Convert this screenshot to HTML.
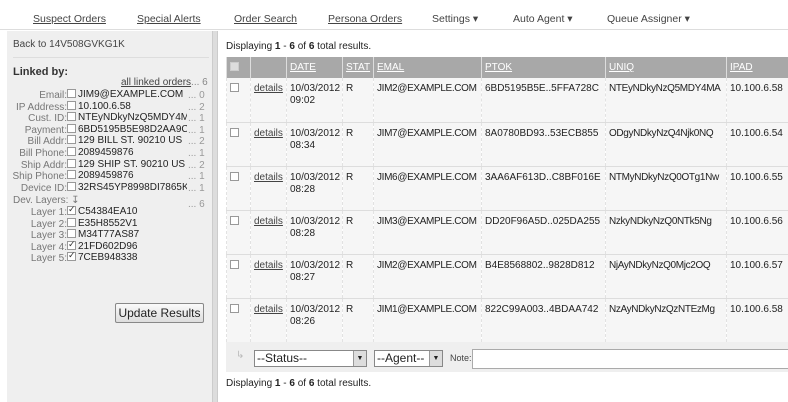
<!DOCTYPE html>
<html><head><style>
*{margin:0;padding:0;box-sizing:border-box}
body{width:788px;height:402px;overflow:hidden;background:#fff;font-family:"Liberation Sans",Arial,sans-serif;font-size:11px;color:#222;position:relative}
.nav{position:absolute;top:0;left:0;width:788px;height:30px;border-bottom:1px solid #ddd}
.nav span{position:absolute;top:13px;font-size:10.5px;color:#444}
.left{position:absolute;left:7px;top:31px;width:205px;height:371px;background:#efefef}
.split{position:absolute;left:212px;top:31px;width:6px;height:371px;background:#ddd;border-left:1px solid #ccc;border-right:1px solid #ccc}
.lt{position:absolute;font-size:10px;color:#777;white-space:nowrap}
.lb{position:absolute;left:0;width:60px;text-align:right;font-size:10px;color:#777;white-space:nowrap}
.lv{position:absolute;left:60px;width:120px;overflow:hidden;font-size:10px;color:#222;white-space:nowrap}
.cb{display:inline-block;width:9px;height:9px;border:1px solid #999;background:#fff;vertical-align:-1px;margin-right:2px;position:relative}
.cb.c:after{content:"✓";position:absolute;left:0;top:-3px;font-size:9px;color:#333}
.cnt{position:absolute;left:181px;font-size:10px;color:#999}
table{position:absolute;left:226px;top:57px;border-collapse:collapse;table-layout:fixed;width:570px}
th{background:#a8a8a8;height:21px;color:#fff;font-weight:normal;text-align:left;padding-left:3px;border-left:1px solid #ddd;text-decoration:underline;font-size:10px}
td{height:44px;vertical-align:top;padding:5px 3px 0;border-bottom:1px solid #ddd;border-left:1px dashed #e2e2e2;background:#f6f6f6;font-size:10px;line-height:12px;white-space:nowrap;overflow:hidden}
td.d{text-decoration:underline;color:#444}
td.e{letter-spacing:-0.35px}
.bar{position:absolute;left:226px;top:342px;width:562px;height:30px;background:#efefef}
.sel{position:absolute;top:8px;height:17px;border:1px solid #888;background:#fff;font-size:12px;padding-left:2px;line-height:15px}
.sel i{position:absolute;right:0;top:0;width:13px;height:15px;border-left:1px solid #999;background:#ddd;font-style:normal;font-size:7px;text-align:center;line-height:15px}
</style></head><body>
<div class="nav">
<span style="left:33px"><u>Suspect Orders</u></span>
<span style="left:137px"><u>Special Alerts</u></span>
<span style="left:234px"><u>Order Search</u></span>
<span style="left:328px"><u>Persona Orders</u></span>
<span style="left:432px">Settings ▾</span>
<span style="left:513px">Auto Agent ▾</span>
<span style="left:607px">Queue Assigner ▾</span>
</div>
<div class="left">
<div class="lt" style="left:6px;top:8px;color:#444">Back to 14V508GVKG1K</div>
<div style="position:absolute;left:6px;top:26px;width:196px;border-top:1px solid #ddd"></div>
<div class="lt" style="left:6px;top:35px;color:#333;font-weight:bold;font-size:11px">Linked by:</div>
<div class="lt" style="left:114px;top:46px;color:#444"><u>all linked orders</u><span style="color:#888">... 6</span></div>
<div class="lb" style="top:59px">Email:</div><div class="lv" style="top:58px"><span class="cb"></span>JIM9@EXAMPLE.COM</div><div class="cnt" style="top:59px">... 0</div>
<div class="lb" style="top:71px">IP Address:</div><div class="lv" style="top:70px"><span class="cb"></span>10.100.6.58</div><div class="cnt" style="top:71px">... 2</div>
<div class="lb" style="top:82px">Cust. ID:</div><div class="lv" style="top:81px"><span class="cb"></span>NTEyNDkyNzQ5MDY4M</div><div class="cnt" style="top:82px">... 1</div>
<div class="lb" style="top:94px">Payment:</div><div class="lv" style="top:93px"><span class="cb"></span>6BD5195B5E98D2AA9C</div><div class="cnt" style="top:94px">... 1</div>
<div class="lb" style="top:105px">Bill Addr:</div><div class="lv" style="top:104px"><span class="cb"></span>129 BILL ST. 90210 US</div><div class="cnt" style="top:105px">... 2</div>
<div class="lb" style="top:117px">Bill Phone:</div><div class="lv" style="top:116px"><span class="cb"></span>2089459876</div><div class="cnt" style="top:117px">... 1</div>
<div class="lb" style="top:129px">Ship Addr:</div><div class="lv" style="top:128px"><span class="cb"></span>129 SHIP ST. 90210 US</div><div class="cnt" style="top:129px">... 2</div>
<div class="lb" style="top:140px">Ship Phone:</div><div class="lv" style="top:139px"><span class="cb"></span>2089459876</div><div class="cnt" style="top:140px">... 1</div>
<div class="lb" style="top:152px">Device ID:</div><div class="lv" style="top:151px"><span class="cb"></span>32RS45YP8998DI7865K</div><div class="cnt" style="top:152px">... 1</div>
<div class="lt" style="left:6px;top:164px">Dev. Layers: ↧</div><div class="cnt" style="top:168px">... 6</div>
<div class="lb" style="top:176px">Layer 1:</div><div class="lv" style="top:175px"><span class="cb c"></span>C54384EA10</div>
<div class="lb" style="top:188px">Layer 2:</div><div class="lv" style="top:187px"><span class="cb"></span>E35H8552V1</div>
<div class="lb" style="top:199px">Layer 3:</div><div class="lv" style="top:198px"><span class="cb"></span>M34T77AS87</div>
<div class="lb" style="top:211px">Layer 4:</div><div class="lv" style="top:210px"><span class="cb c"></span>21FD602D96</div>
<div class="lb" style="top:222px">Layer 5:</div><div class="lv" style="top:221px"><span class="cb c"></span>7CEB948338</div>
<div style="position:absolute;left:108px;top:272px;width:89px;height:20px;border:1px solid #888;border-radius:2px;background:linear-gradient(#fafafa,#ddd);font-size:12px;text-align:center;line-height:18px;color:#222">Update Results</div>
</div>
<div class="split"></div>
<div style="position:absolute;left:226px;top:41px;font-size:10px">Displaying <b>1</b> - <b>6</b> of <b>6</b> total results.</div>
<table>
<colgroup><col style="width:24px"><col style="width:36px"><col style="width:56px"><col style="width:31px"><col style="width:108px"><col style="width:124px"><col style="width:121px"><col></colgroup>
<tr><th><span class="cb" style="border-color:#ccc;background:#ddd"></span></th><th></th><th>DATE</th><th>STAT</th><th>EMAL</th><th>PTOK</th><th>UNIQ</th><th>IPAD</th></tr>
<tr><td><span class="cb"></span></td><td class="d">details</td><td>10/03/2012<br>09:02</td><td>R</td><td class="e">JIM2@EXAMPLE.COM</td><td>6BD5195B5E..5FFA728C</td><td class="e">NTEyNDkyNzQ5MDY4MA</td><td>10.100.6.58</td></tr>
<tr><td><span class="cb"></span></td><td class="d">details</td><td>10/03/2012<br>08:34</td><td>R</td><td class="e">JIM7@EXAMPLE.COM</td><td>8A0780BD93..53ECB855</td><td class="e">ODgyNDkyNzQ4Njk0NQ</td><td>10.100.6.54</td></tr>
<tr><td><span class="cb"></span></td><td class="d">details</td><td>10/03/2012<br>08:28</td><td>R</td><td class="e">JIM6@EXAMPLE.COM</td><td>3AA6AF613D..C8BF016E</td><td class="e">NTMyNDkyNzQ0OTg1Nw</td><td>10.100.6.55</td></tr>
<tr><td><span class="cb"></span></td><td class="d">details</td><td>10/03/2012<br>08:28</td><td>R</td><td class="e">JIM3@EXAMPLE.COM</td><td>DD20F96A5D..025DA255</td><td class="e">NzkyNDkyNzQ0NTk5Ng</td><td>10.100.6.56</td></tr>
<tr><td><span class="cb"></span></td><td class="d">details</td><td>10/03/2012<br>08:27</td><td>R</td><td class="e">JIM2@EXAMPLE.COM</td><td>B4E8568802..9828D812</td><td class="e">NjAyNDkyNzQ0Mjc2OQ</td><td>10.100.6.57</td></tr>
<tr><td><span class="cb"></span></td><td class="d">details</td><td>10/03/2012<br>08:26</td><td>R</td><td class="e">JIM1@EXAMPLE.COM</td><td>822C99A003..4BDAA742</td><td class="e">NzAyNDkyNzQzNTEzMg</td><td>10.100.6.58</td></tr>
</table>
<div class="bar">
<div style="position:absolute;left:10px;top:8px;color:#bbb;font-size:10px">↳</div>
<div class="sel" style="left:28px;width:113px">--Status--<i>▼</i></div>
<div class="sel" style="left:148px;width:69px">--Agent--<i>▼</i></div>
<div style="position:absolute;left:224px;top:11px;font-size:9px;color:#444">Note:</div>
<div style="position:absolute;left:246px;top:7px;width:320px;height:20px;border:1px solid #aaa;background:#fff"></div>
</div>
<div style="position:absolute;left:226px;top:378px;font-size:10px">Displaying <b>1</b> - <b>6</b> of <b>6</b> total results.</div>
</body></html>
